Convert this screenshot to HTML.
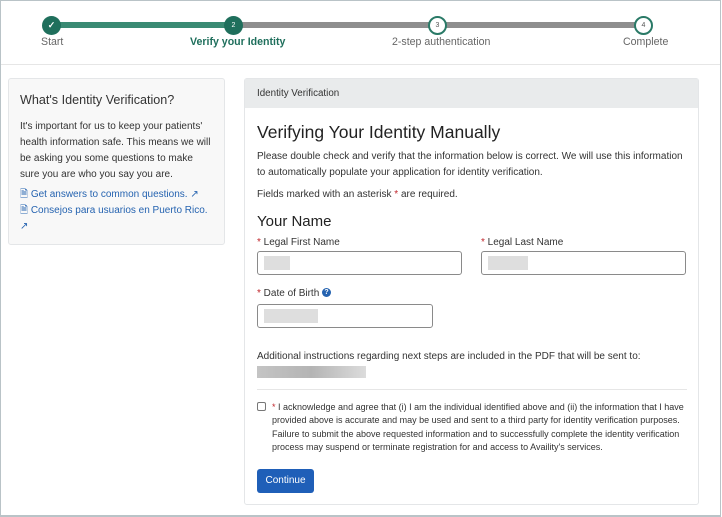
<!DOCTYPE html>
<html><head><style>
*{margin:0;padding:0;box-sizing:border-box}
body{width:722px;height:517px;overflow:hidden;background:#fff;font-family:"Liberation Sans",Arial,sans-serif;color:#333;position:relative}
.frame{position:absolute;left:0;top:0;width:721px;height:517px;border:1px solid #b9c3c7;border-bottom:2px solid #b9c3c7}
.a{position:absolute;white-space:nowrap}
.hdr{position:absolute;left:1px;top:1px;width:719px;height:64px;border-bottom:1px solid #e6e6e6}
.c{position:absolute;width:19px;height:19px;border-radius:50%;top:15px;font-size:7px;text-align:center;line-height:15px}
.lbl{position:absolute;top:35px;font-size:10.6px;color:#666}
.card{position:absolute;border:1px solid #e4e6e8;border-radius:3px}
.req{color:#c0262c}
.in{position:absolute;height:24px;border:1px solid #8a8a8a;border-radius:3px;background:#fff}
.blur{position:absolute;background:#dedede;height:14px;top:4px;left:6px}
.t11{font-size:10px;color:#333}
.lnk{color:#2563b0;font-size:10px}
</style></head><body>
<div class="hdr">
 <div class="a" style="left:51px;top:21px;width:182px;height:6px;background:#3a8a73"></div>
 <div class="a" style="left:233px;top:21px;width:410px;height:6px;background:#8e8e8e"></div>
 <div class="c" style="left:41px;background:#1f6f5c;color:#fff;font-size:9px;line-height:19px;font-weight:bold">✓</div>
 <div class="c" style="left:223px;background:#1f6f5c;color:#fff;line-height:19px">2</div>
 <div class="c" style="left:427px;background:#fff;border:2px solid #2a7a67;color:#555">3</div>
 <div class="c" style="left:633px;background:#fff;border:2px solid #2a7a67;color:#555">4</div>
 <div class="lbl" style="left:40px">Start</div>
 <div class="lbl" style="left:189px;color:#1f6f5c;font-weight:bold">Verify your Identity</div>
 <div class="lbl" style="left:391px">2-step authentication</div>
 <div class="lbl" style="left:622px">Complete</div>
</div>
<div class="card" style="left:8px;top:78px;width:217px;height:167px;background:#f8f8f8">
 <div class="a" style="left:11px;top:14px;font-size:12.6px;color:#333">What's Identity Verification?</div>
 <div class="a" style="left:11px;top:40px;line-height:16px;font-size:10px;color:#333">It's important for us to keep your patients'<br>health information safe. This means we will<br>be asking you some questions to make<br>sure you are who you say you are.</div>
 <div class="a lnk" style="left:11px;top:108px;line-height:16px">🗎 Get answers to common questions. ↗<br>🗎 Consejos para usuarios en Puerto Rico.<br>↗</div>
</div>
<div class="card" style="left:244px;top:78px;width:455px;height:427px;background:#fff">
 <div class="a" style="left:0;top:0;width:453px;height:29px;background:#e9ebec"></div>
 <div class="a" style="left:12px;top:9px;font-size:9.8px">Identity Verification</div>
 <div class="a" style="left:12px;top:43px;font-size:17.5px;color:#222">Verifying Your Identity Manually</div>
 <div class="a" style="left:12px;top:70px;line-height:16px;font-size:10px">Please double check and verify that the information below is correct. We will use this information<br>to automatically populate your application for identity verification.</div>
 <div class="a" style="left:12px;top:110px;font-size:10px">Fields marked with an asterisk <span class="req">*</span> are required.</div>
 <div class="a" style="left:12px;top:134px;font-size:15px;color:#222">Your Name</div>
 <div class="a t11" style="left:12px;top:158px"><span class="req">*</span> Legal First Name</div>
 <div class="a t11" style="left:236px;top:158px"><span class="req">*</span> Legal Last Name</div>
 <div class="in" style="left:12px;top:172px;width:205px"><div class="blur" style="width:26px"></div></div>
 <div class="in" style="left:236px;top:172px;width:205px"><div class="blur" style="width:40px"></div></div>
 <div class="a t11" style="left:12px;top:209px"><span class="req">*</span> Date of Birth <span style="display:inline-block;width:9px;height:9px;border-radius:50%;background:#2563b0;color:#fff;font-size:7px;line-height:9px;text-align:center;font-weight:bold;vertical-align:2px">?</span></div>
 <div class="in" style="left:12px;top:225px;width:176px"><div class="blur" style="width:54px"></div></div>
 <div class="a" style="left:12px;top:272px;font-size:10px">Additional instructions regarding next steps are included in the PDF that will be sent to:</div>
 <div class="a" style="left:12px;top:287px;width:109px;height:12px;background:linear-gradient(90deg,#c4c4c4,#b4b4b4 50%,#dcdcdc)"></div>
 <div class="a" style="left:12px;top:310px;width:430px;height:1px;background:#e6e6e6"></div>
 <div class="a" style="left:12px;top:323px;width:9px;height:9px;border:1px solid #777;border-radius:2px"></div>
 <div class="a" style="left:27px;top:322px;font-size:9px;line-height:13.3px;color:#333"><span class="req">*</span> I acknowledge and agree that (i) I am the individual identified above and (ii) the information that I have<br>provided above is accurate and may be used and sent to a third party for identity verification purposes.<br>Failure to submit the above requested information and to successfully complete the identity verification<br>process may suspend or terminate registration for and access to Availity's services.</div>
 <div class="a" style="left:12px;top:390px;width:57px;height:24px;background:#1f5fb8;border-radius:3px;color:#fff;font-size:10px;line-height:24px;text-align:center">Continue</div>
</div>
<div class="frame"></div>
</body></html>
